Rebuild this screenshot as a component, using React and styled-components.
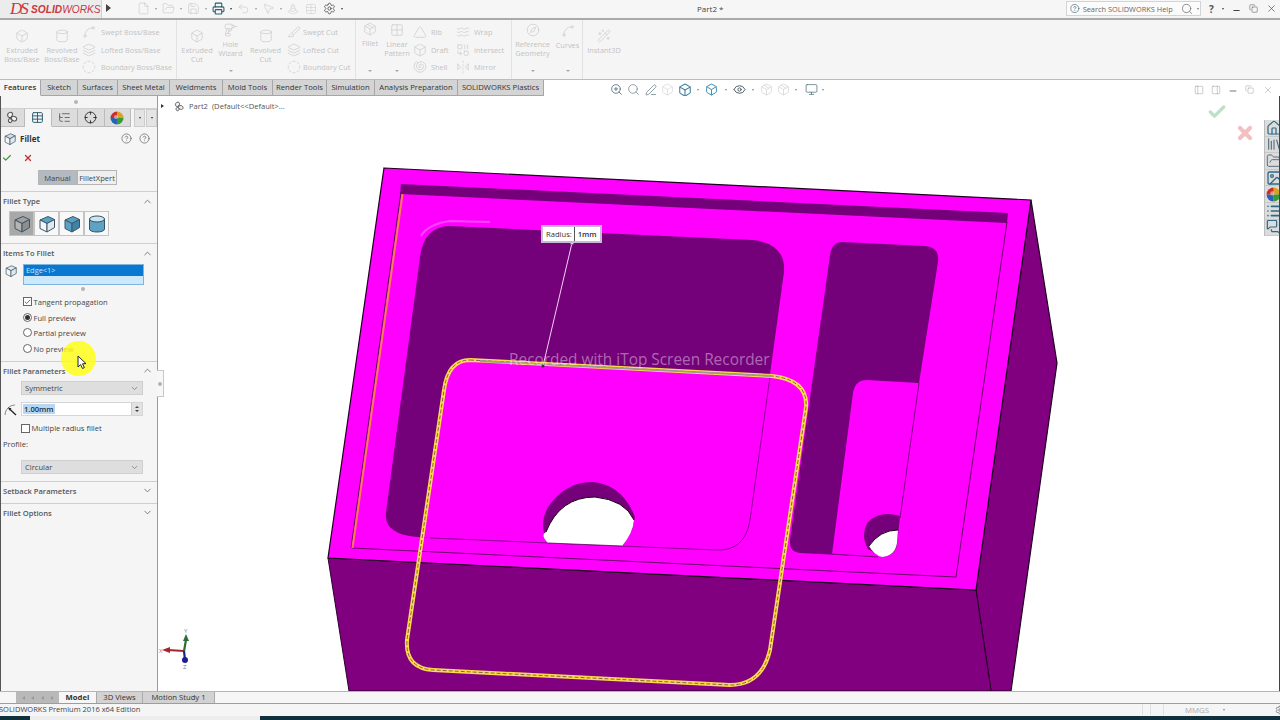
import React from "react";
import styled, { createGlobalStyle } from "styled-components";
import {
  Box, Cylinder, Spline, Layers, CircleDashed, Drill, Slice, Grid2x2, Triangle, Shell, Package,
  FlipHorizontal2, Compass, Wand2, Waves, Combine, File, FolderOpen, Save, Printer, Undo2,
  MousePointer2, TrafficCone, Table, Settings, Search, ZoomIn, PenLine, Eye, Monitor, Home,
  Library, Image, List, MessagesSquare, Check, X, Minus, Copy, HelpCircle, PanelLeft, PanelRight,
  ChevronUp, ChevronDown, Crosshair, ListTree,
} from "lucide-react";

const Global = createGlobalStyle`
  html, body { margin: 0; padding: 0; width: 1280px; height: 720px; overflow: hidden; background: #fff; }
  * { box-sizing: border-box; }
`;

const Page = styled.div`
  width: 1280px; height: 720px; display: flex; flex-direction: column; overflow: hidden;
  font-family: "Open Sans", "Noto Sans", sans-serif; font-size: 8px; color: #333;
`;

/* ---------- title bar ---------- */
const TitleBar = styled.header`
  height: 20px; flex: none; display: flex; align-items: flex-start; background: #f6f6f6;
  border-bottom: 2px solid #a9a9a9; position: relative;
`;
const LogoBox = styled.div`
  width: 102px; height: 18px; background: #ececec; display: flex; align-items: center; padding-left: 10px; overflow: hidden;
  border-right: 1px solid #cfcfcf;
`;
const LogoMark = styled.span`
  font: italic 400 17px "Liberation Serif", serif; color: #c8383f; letter-spacing: -2px; width: 21px; flex: none; margin-top: -1px;
`;
const LogoWord = styled.span`
  font: italic 700 10.2px "Liberation Sans", sans-serif; color: #c8383f; white-space: nowrap;
  & > i { font-weight: 400; }
`;
const QuickArrow = styled.span`
  width: 0; height: 0; margin: 4px 0 0 4px; border-left: 5px solid #444; border-top: 4px solid transparent; border-bottom: 4px solid transparent;
`;
const QuickBar = styled.div`
  display: flex; align-items: center; height: 17px; margin-left: 26px; gap: 3px;
`;
const Caret = styled.span`
  display: inline-block; width: 0; height: 0; border-left: 1.6px solid transparent; border-right: 1.6px solid transparent;
  border-top: 2.4px solid ${(p) => p.$c || "#777"}; margin: 0 ${(p) => p.$m ?? 2}px; flex: none;
`;
const DocTitle = styled.div`
  position: absolute; left: 697px; top: 3px; font-size: 8px; color: #444;
`;
const SearchBox = styled.div`
  position: absolute; left: 1066px; top: 1px; width: 135px; height: 15px; background: #fbfbfb; border: 1px solid #d4d4d4;
  display: flex; align-items: center; padding-left: 3px; gap: 3px; color: #666; font-size: 7.4px; white-space: nowrap;
`;
const WinControls = styled.div`
  position: absolute; left: 1209px; top: 1px; display: flex; align-items: center; gap: 8px; height: 15px;
`;
const QMark = styled.span`
  font: 700 10px "Open Sans", sans-serif; color: #555;
`;

/* ---------- ribbon ---------- */
const Ribbon = styled.div`
  height: 59px; flex: none; display: flex; background: #f5f5f5; padding-left: 2px; color: #c3c3c3;
`;
const RibbonGroup = styled.div`
  display: flex; width: ${(p) => p.$w}px; padding: 3px 0; border-right: ${(p) => (p.$last ? "none" : "1px solid #e2e2e2")}; height: 59px;
`;
const BigButton = styled.div`
  width: ${(p) => p.$w}px; flex: none; display: flex; flex-direction: column; align-items: center; text-align: center;
  line-height: 9px; font-size: 7.4px;
`;
const BigIconSlot = styled.div`
  height: ${(p) => p.$h}px; flex: none; display: flex; align-items: flex-end; justify-content: center; padding-bottom: 3px;
`;
const BigCaret = styled.span`
  margin-top: auto; margin-bottom: 4px; width: 0; height: 0; border-left: 2px solid transparent; border-right: 2px solid transparent;
  border-top: 2.5px solid #a8a8a8;
`;
const SmallStack = styled.div`
  display: flex; flex-direction: column; width: ${(p) => p.$w}px; flex: none; margin-left: ${(p) => p.$ml || 0}px;
`;
const SmallRow = styled.div`
  height: 18px; display: flex; align-items: center; font-size: 7.4px; white-space: nowrap; gap: ${(p) => p.$gap}px;
  & > svg { flex: none; }
`;

/* ---------- tab row ---------- */
const TabRow = styled.nav`
  height: 17px; flex: none; display: flex; align-items: stretch; background: #fff; position: relative; border-top: 1px solid #bcbcbc;
`;
const CmdTab = styled.div`
  width: ${(p) => p.$w}px; display: flex; align-items: center; justify-content: center; white-space: nowrap; font-size: 7.7px; color: #333; padding-bottom: 2px;
  background: ${(p) => (p.$active ? "#f5f5f5" : "#d4d4d4")}; border-right: 1px solid #a6a6a6; border-bottom: 1px solid ${(p) => (p.$active ? "#f5f5f5" : "#a6a6a6")};
  font-weight: ${(p) => (p.$active ? 600 : 400)};
`;
const HeadsUp = styled.div`
  position: absolute; left: 608px; top: 3px; display: flex; align-items: center; height: 13px;
`;
const HeadIcon = styled.span`
  width: ${(p) => p.$w || 17}px; display: flex; justify-content: center; align-items: center; flex: none;
`;
const ViewControls = styled.div`
  position: absolute; left: 1194px; top: 3px; display: flex; align-items: center; gap: 7px; height: 13px;
`;

/* ---------- main ---------- */
const Main = styled.main`
  flex: 1; min-height: 0; display: flex; border-right: 1px solid #444;
`;
const Panel = styled.aside`
  width: 158px; flex: none; background: #f5f5f5; border-left: 1px solid #555; border-right: 1px solid #9a9a9a; position: relative;
  display: flex; flex-direction: column;
`;
const Strip = styled.div`
  height: 13px; border-bottom: 1px solid #d0d0d0; display: flex; align-items: center; justify-content: center; padding-right: 6px;
`;
const Dot = styled.span`
  width: 4px; height: 4px; border-radius: 50%; background: #b4b4b4; display: block;
`;
const PanelTabs = styled.div`
  height: 18px; display: flex; align-items: stretch; position: relative;
`;
const PanelTab = styled.div`
  width: ${(p) => p.$w || 26.5}px; flex: none; display: flex; align-items: center; justify-content: center;
  background: ${(p) => (p.$active ? "#f5f5f5" : "#dcdcdc")}; border-right: 1px solid #bbb; border-bottom: 1px solid ${(p) => (p.$active ? "#f5f5f5" : "#bbb")};
`;
const TabArrow = styled.div`
  width: 11px; flex: none; margin-left: ${(p) => p.$ml}px; display: flex; align-items: center; justify-content: center; background: #e4e4e4; border: 1px solid #ccc;
`;
const PropHeader = styled.div`
  height: 23px; display: flex; align-items: center; padding: 0 7px 0 2px; gap: 3px; font-size: 8px; font-weight: 700; color: #333;
`;
const HelpGroup = styled.div`
  margin-left: auto; display: flex; gap: 7px; align-items: center;
`;
const ActionRow = styled.div`
  height: 16px; display: flex; align-items: center; padding-left: 1px; gap: 11px;
`;
const ModeRow = styled.div`
  display: flex; margin: 4px 0 6px 37px; height: 15px;
`;
const ModeButton = styled.div`
  width: ${(p) => p.$w}px; display: flex; align-items: center; justify-content: center; font-size: 7.6px; white-space: nowrap; color: #444;
  background: ${(p) => (p.$on ? "#b3bac2" : "#efefef")}; border: 1px solid #b5b5b5;
`;
const Section = styled.section`
  border-top: 1px solid #cfcfcf;
  padding-bottom: ${(p) => p.$pb || 0}px;
`;
const SectionHead = styled.div`
  height: ${(p) => p.$h || 19}px; display: flex; align-items: center; justify-content: space-between; padding: 0 4px 1px 2px;
  font-size: 7.6px; font-weight: 600; color: #555; white-space: nowrap;
`;
const TypeRow = styled.div`
  display: flex; margin-left: 8px; height: 25px;
`;
const TypeCell = styled.div`
  width: 25px; height: 25px; display: flex; align-items: center; justify-content: center;
  background: ${(p) => (p.$on ? "#a8a8a8" : "#f8f8f8")}; border: 1px solid #c4c4c4;
`;
const ListRow = styled.div`
  display: flex; align-items: flex-start; margin-top: 1px; padding-left: 3px; height: 21px; gap: 5px;
`;
const SelectList = styled.div`
  width: 121px; height: 21px; background: #cce8fb; border: 1px solid #7fb5dc; display: flex; flex-direction: column;
`;
const SelectedItem = styled.div`
  height: 11px; background: #0a78d0; color: #cfe6f7; font-size: 7.4px; line-height: 10px; padding-left: 2px;
`;
const ListGrip = styled.div`
  height: 6px; margin-top: 1px; display: flex; align-items: center; justify-content: center; padding-left: 8px;
`;
const OptionRow = styled.div`
  height: ${(p) => p.$h || 15}px; margin-top: ${(p) => p.$mt || 0}px; display: flex; align-items: center; padding-left: ${(p) => p.$pl}px; gap: 1.5px;
  font-size: 7.6px; color: #444; white-space: nowrap;
`;
const CheckBox = styled.span`
  width: 9px; height: 9px; background: #fff; border: 1px solid #666; display: flex; align-items: center; justify-content: center; flex: none;
`;
const Radio = styled.span`
  width: 9px; height: 9px; border-radius: 50%; background: #fff; border: 1px solid #666; display: flex; align-items: center; justify-content: center; flex: none;
  &::after { content: ""; width: 5px; height: 5px; border-radius: 50%; background: ${(p) => (p.$on ? "#333" : "transparent")}; }
`;
const Combo = styled.div`
  width: 122px; height: ${(p) => p.$h || 14}px; margin: ${(p) => p.$mt || 0}px 0 0 20px; background: #dedede; border: 1px solid #cfcfcf;
  display: flex; align-items: center; justify-content: space-between; padding: 0 3px; font-size: 7.6px; color: #444;
`;
const InputRow = styled.div`
  display: flex; align-items: center; margin-top: 7px; height: 14px; padding-left: 3px; gap: 4px;
`;
const NumberInput = styled.div`
  width: 122px; height: 14px; background: #fff; border: 1px solid #d6d6d6; display: flex; align-items: center; padding-left: 1px; position: relative;
  font-size: 7.6px; color: #234;
`;
const Selected = styled.span`
  background: #b7d7f2; padding: 0 1px; line-height: 10px; font-weight: 600;
`;
const Spinner = styled.span`
  margin-left: auto; width: 11px; height: 100%; background: #e2e2e2; border-left: 1px solid #ccc; display: flex; flex-direction: column; align-items: center; justify-content: center; gap: 2px;
`;
const SpinUp = styled.i`
  width: 0; height: 0; border-left: 2px solid transparent; border-right: 2px solid transparent; border-bottom: 2.5px solid #444;
`;
const SpinDown = styled.i`
  width: 0; height: 0; border-left: 2px solid transparent; border-right: 2px solid transparent; border-top: 2.5px solid #444;
`;
const Highlight = styled.div`
  position: absolute; left: 60px; top: 245px; width: 35px; height: 35px; border-radius: 50%;
  background: rgba(255, 255, 20, 0.82); pointer-events: none;
`;
const Cursor = styled.svg`
  position: absolute; left: 75px; top: 259px; width: 12px; height: 15px;
`;
const Splitter = styled.div`
  position: absolute; left: 156px; top: 274px; width: 7px; height: 27px; background: #f7f7f7; border: 1px solid #c8c8c8; border-left: none;
  display: flex; align-items: center; justify-content: center; z-index: 3;
`;

/* ---------- viewport ---------- */
const Viewport = styled.div`
  flex: 1; position: relative; background: #fff; overflow: hidden;
`;
const Scene = styled.svg`
  display: block; width: 1121px; height: 595px;
`;
const TreeCrumb = styled.div`
  position: absolute; left: 3px; top: 4px; height: 12px; display: flex; align-items: center; gap: 4px; font-size: 7.6px; color: #555; white-space: nowrap;
`;
const CrumbArrow = styled.span`
  width: 0; height: 0; border-left: 3px solid #333; border-top: 2.5px solid transparent; border-bottom: 2.5px solid transparent; margin-right: 6px;
`;
const Confirm = styled.div`
  position: absolute; left: ${(p) => p.$x}px; top: ${(p) => p.$y}px; opacity: 0.3;
`;
const TaskPane = styled.div`
  position: absolute; right: 0; top: 24px; width: 15px; display: flex; flex-direction: column;
  background: #dcdcdc; border-left: 1px solid #bcbcbc;
`;
const TaskIcon = styled.div`
  height: 16.6px; display: flex; align-items: center; justify-content: flex-start; padding-left: 1px; border-bottom: 1px solid #c8c8c8;
  overflow: hidden;
  & > svg { flex: none; }
`;
const DimBox = styled.div`
  position: absolute; left: 383px; top: 129px; width: 61px; height: 18px; background: #fff; border: 2px solid #c9b8d8;
  display: flex; align-items: center; font-size: 7.6px; color: #333; white-space: nowrap;
`;
const DimLabel = styled.span`
  padding: 0 2px 0 3px; border-right: 1px solid #555; height: 14px; line-height: 14px;
`;
const DimValue = styled.span`
  padding-left: 3px; font-weight: 600;
`;
const Watermark = styled.div`
  position: absolute; left: 351px; top: 253px; font-size: 15.4px; color: rgba(255, 255, 255, 0.42); white-space: nowrap;
`;

/* ---------- bottom ---------- */
const BottomTabs = styled.div`
  height: 12px; flex: none; display: flex; padding-left: 16px; background: #f6f6f6; border-top: 1px solid #b5b5b5;
`;
const NavArrows = styled.div`
  width: 43px; background: #b9b9b9; display: flex; align-items: center; justify-content: space-around; padding: 0 3px;
`;
const NavMark = styled.i`
  width: 0; height: 0; border-right: 3px solid #9a9a9a; border-top: 2px solid transparent; border-bottom: 2px solid transparent;
`;
const SheetTab = styled.div`
  width: ${(p) => p.$w}px; display: flex; align-items: center; justify-content: center; font-size: 7.7px; color: #333; white-space: nowrap; padding-bottom: 2px;
  font-weight: ${(p) => (p.$active ? 700 : 400)};
  background: ${(p) => (p.$active ? "#f6f6f6" : "#d2d2d2")}; border-right: 1px solid #aaa;
`;
const StatusBar = styled.footer`
  height: 13px; flex: none; background: #f5f5f5; border-top: 1px solid #9d9d9d; display: flex; align-items: center; position: relative; font-size: 7.5px; color: #444;
  padding-bottom: 3px;
`;
const StatusText = styled.span`
  margin-left: -1px; white-space: nowrap;
`;
const StatusRight = styled.div`
  position: absolute; left: 1142px; top: 0; height: 11px; display: flex; align-items: center; color: #aaa; font-size: 7.8px;
`;
const StatusCell = styled.span`
  width: ${(p) => p.$w}px; height: 11px; border-left: 1px solid #e0e0e0;
`;
const TaskBar = styled.div`
  height: 4px; flex: none; display: flex; background: #10303c;
`;
const TaskSlot = styled.div`
  margin-left: 30px; width: 230px; background: #ededed;
`;

/* ---------- icons ---------- */
const Cube = ({ top = "#fff", side = "#dfe9ee", front = "#f5f5f5", s = 20 }) => (
  <svg width={s} height={s} viewBox="0 0 20 20">
    <path d="M3 6 L11 2.5 L17.5 5.5 L10 9.5 Z" fill={top} stroke="#3c5564" strokeWidth="1" />
    <path d="M3 6 L10 9.5 L10 18 L3 14.5 Z" fill={front} stroke="#3c5564" strokeWidth="1" />
    <path d="M10 9.5 L17.5 5.5 L17.5 13.5 L10 18 Z" fill={side} stroke="#3c5564" strokeWidth="1" />
  </svg>
);
const Drum = () => (
  <svg width="20" height="20" viewBox="0 0 20 20">
    <path d="M2.5 5 V15 C2.5 19 17.5 19 17.5 15 V5 Z" fill="#5fa3c4" stroke="#2f5568" />
    <ellipse cx="10" cy="5" rx="7.5" ry="3" fill="#cfe3ec" stroke="#2f5568" />
  </svg>
);
const Wheel = ({ s = 14 }) => (
  <svg width={s} height={s} viewBox="0 0 14 14">
    <path d="M7 7 L7 0.5 A6.5 6.5 0 0 1 13.5 7 Z" fill="#d9a21b" />
    <path d="M7 7 L13.5 7 A6.5 6.5 0 0 1 7 13.5 Z" fill="#3a9a3a" />
    <path d="M7 7 L7 13.5 A6.5 6.5 0 0 1 0.5 7 Z" fill="#2763b5" />
    <path d="M7 7 L0.5 7 A6.5 6.5 0 0 1 7 0.5 Z" fill="#c9302c" />
    <circle cx="6" cy="6" r="2" fill="#f1d9c9" opacity=".6" />
  </svg>
);
const RadiusGlyph = () => (
  <svg width="13" height="13" viewBox="0 0 13 13" fill="none">
    <path d="M1 12 C1.5 6 5 2.5 11 2" stroke="#7c8c96" strokeWidth="1" />
    <path d="M12 12 L5 5.5" stroke="#222" strokeWidth="1.3" />
    <path d="M4 4.5 L7.5 5.2 L5.5 7.5 Z" fill="#222" />
  </svg>
);
const PartTree = ({ s = 12 }) => (
  <svg width={s} height={s} viewBox="0 0 12 12" fill="#eef2f4" stroke="#555" strokeWidth="1">
    <path d="M3 1.5 C5 0.5 6.5 2 6 3.6 L5 5.5 C4 6.6 2 6.2 1.6 4.6 C1.3 3.4 2 2 3 1.5 Z" />
    <path d="M5 5.5 C7 4.4 9 5 9.6 6.3 C10.4 7.6 9.5 9 8.4 9.2 C6.8 9.4 5.4 8.6 5 7.4 Z" />
    <path d="M3.6 7 C5 7 5.8 8.4 5.4 9.6 C5 10.8 3.4 11 2.6 10 C1.8 9 2.4 7.2 3.6 7 Z" />
  </svg>
);

const pale = { color: "#cdcdcd", strokeWidth: 1.3 };
const Big = ({ w, h, icon: I, size = 14, caret, children }) => (
  <BigButton $w={w}>
    <BigIconSlot $h={h}><I size={size} {...pale} /></BigIconSlot>
    <span>{children}</span>
    {caret && <BigCaret />}
  </BigButton>
);
const Small = ({ icon: I, gap, children }) => (
  <SmallRow $gap={gap}><I size={14} {...pale} />{children}</SmallRow>
);

const quick = [
  [File, "#c9c9c9"], [FolderOpen, "#c9c9c9"], [Save, "#c9c9c9"], [Printer, "#2b5f73"], [Undo2, "#c9c9c9"], [MousePointer2, "#c9c9c9"],
];
const tabs = [
  ["Features", 41, true], ["Sketch", 37], ["Surfaces", 40], ["Sheet Metal", 52], ["Weldments", 53], ["Mold Tools", 50],
  ["Render Tools", 54], ["Simulation", 48], ["Analysis Preparation", 83], ["SOLIDWORKS Plastics", 86],
];

const IconChev = () => <Caret $m={0} $c="#888" />;

export default function App() {
  return (
    <Page>
      <Global />
      <TitleBar>
        <LogoBox>
          <LogoMark>DS</LogoMark>
          <LogoWord>SOLID<i>WORKS</i></LogoWord>
        </LogoBox>
        <QuickArrow />
        <QuickBar>
          {quick.map(([I, c], i) => (
            <React.Fragment key={i}>
              <I size={13} color={c} strokeWidth={c === "#c9c9c9" ? 1.2 : 2} />
              <Caret $c={i === 3 ? "#333" : "#999"} />
            </React.Fragment>
          ))}
          <TrafficCone size={12} color="#d2d2d2" strokeWidth={1.3} />
          <Table size={12} color="#d2d2d2" strokeWidth={1.3} style={{ marginLeft: 3 }} />
          <Settings size={13} color="#444" strokeWidth={1.4} style={{ marginLeft: 3 }} />
          <Caret $c="#444" />
        </QuickBar>
        <DocTitle>Part2 *</DocTitle>
        <SearchBox>
          <HelpCircle size={11} color="#3f6478" strokeWidth={1.6} />
          <span>Search SOLIDWORKS Help</span>
          <Search size={14} color="#666" strokeWidth={1.4} style={{ marginLeft: 5 }} />
          <Caret $m={1} />
        </SearchBox>
        <WinControls>
          <QMark>?</QMark>
          <Caret $m={0} $c="#444" />
          <Minus size={9} color="#444" strokeWidth={3} style={{ marginTop: 4 }} />
          <Copy size={9} color="#555" strokeWidth={1.4} />
          <X size={11} color="#555" strokeWidth={1.6} />
        </WinControls>
      </TitleBar>

      <Ribbon>
        <RibbonGroup $w={175}>
          <Big w={40} h={23} icon={Box}>Extruded Boss/Base</Big>
          <Big w={40} h={23} icon={Cylinder}>Revolved Boss/Base</Big>
          <SmallStack $w={90}>
            <Small icon={Spline} gap={5}>Swept Boss/Base</Small>
            <Small icon={Layers} gap={5}>Lofted Boss/Base</Small>
            <Small icon={CircleDashed} gap={5}>Boundary Boss/Base</Small>
          </SmallStack>
        </RibbonGroup>
        <RibbonGroup $w={179}>
          <Big w={40} h={23} icon={Box}>Extruded Cut</Big>
          <Big w={27} h={17} icon={Drill} caret>Hole Wizard</Big>
          <Big w={43} h={23} icon={Cylinder}>Revolved Cut</Big>
          <SmallStack $w={66}>
            <Small icon={Slice} gap={2}>Swept Cut</Small>
            <Small icon={Layers} gap={2}>Lofted Cut</Small>
            <Small icon={CircleDashed} gap={2}>Boundary Cut</Small>
          </SmallStack>
        </RibbonGroup>
        <RibbonGroup $w={156}>
          <Big w={28} h={16} icon={Package} caret>Fillet</Big>
          <Big w={26} h={17} icon={Grid2x2} caret>Linear Pattern</Big>
          <SmallStack $w={43} $ml={3}>
            <Small icon={Triangle} gap={4}>Rib</Small>
            <Small icon={Box} gap={4}>Draft</Small>
            <Small icon={Shell} gap={4}>Shell</Small>
          </SmallStack>
          <SmallStack $w={50}>
            <Small icon={Waves} gap={4}>Wrap</Small>
            <Small icon={Combine} gap={4}>Intersect</Small>
            <Small icon={FlipHorizontal2} gap={4}>Mirror</Small>
          </SmallStack>
        </RibbonGroup>
        <RibbonGroup $w={71}>
          <Big w={41} h={17} icon={Compass} caret>Reference Geometry</Big>
          <Big w={29} h={18} icon={Spline} caret>Curves</Big>
        </RibbonGroup>
        <RibbonGroup $w={60} $last>
          <Big w={42} h={23} icon={Wand2}>Instant3D</Big>
        </RibbonGroup>
      </Ribbon>

      <TabRow>
        {tabs.map(([t, w, a]) => <CmdTab key={t} $w={w} $active={a}>{t}</CmdTab>)}
        <HeadsUp>
          <HeadIcon><ZoomIn size={13} color="#4a6a78" strokeWidth={1.5} /></HeadIcon>
          <HeadIcon><Search size={13} color="#6a7f88" strokeWidth={1.3} /></HeadIcon>
          <HeadIcon><PenLine size={12} color="#6a7f88" strokeWidth={1.5} /></HeadIcon>
          <HeadIcon><Box size={13} color="#d4d4d4" strokeWidth={1.2} /></HeadIcon>
          <HeadIcon><Box size={14} color="#3d7f9c" strokeWidth={1.8} /></HeadIcon>
          <HeadIcon $w={9}><IconChev /></HeadIcon>
          <HeadIcon $w={19}><Box size={13} color="#3d8fb4" strokeWidth={1.8} /></HeadIcon>
          <HeadIcon $w={9}><IconChev /></HeadIcon>
          <HeadIcon $w={18}><Eye size={13} color="#4f5f66" strokeWidth={1.8} /></HeadIcon>
          <HeadIcon $w={9}><IconChev /></HeadIcon>
          <HeadIcon $w={18}><Package size={13} color="#d8d8d8" strokeWidth={1.6} /></HeadIcon>
          <HeadIcon $w={16}><Package size={13} color="#d8d8d8" strokeWidth={1.6} /></HeadIcon>
          <HeadIcon $w={9}><IconChev /></HeadIcon>
          <HeadIcon $w={22}><Monitor size={13} color="#55707c" strokeWidth={1.4} /></HeadIcon>
          <HeadIcon $w={1}><IconChev /></HeadIcon>
        </HeadsUp>
        <ViewControls>
          <PanelLeft size={10} color="#999" strokeWidth={1.2} />
          <PanelRight size={10} color="#999" strokeWidth={1.2} />
          <Minus size={10} color="#777" strokeWidth={2.5} style={{ marginTop: 3 }} />
          <Copy size={9} color="#999" strokeWidth={1.2} />
          <X size={10} color="#999" strokeWidth={1.2} style={{ marginLeft: 2 }} />
        </ViewControls>
      </TabRow>

      <Main>
        <Panel>
          <Strip><Dot /></Strip>
          <PanelTabs>
            <PanelTab $w={24}><PartTree s={13} /></PanelTab>
            <PanelTab $active><Table size={13} color="#2f5f72" strokeWidth={1.8} /></PanelTab>
            <PanelTab><ListTree size={13} color="#555" strokeWidth={1.5} /></PanelTab>
            <PanelTab><Crosshair size={13} color="#222" strokeWidth={1.6} /></PanelTab>
            <PanelTab><Wheel /></PanelTab>
            <TabArrow $ml={3}><Caret $m={0} $c="#333" /></TabArrow>
            <TabArrow $ml={1}><Caret $m={0} $c="#333" /></TabArrow>
          </PanelTabs>
          <PropHeader>
            <Cube s={14} top="#cfe0e8" />
            <span>Fillet</span>
            <HelpGroup>
              <HelpCircle size={11} color="#555" strokeWidth={1.4} />
              <HelpCircle size={11} color="#555" strokeWidth={1.4} />
            </HelpGroup>
          </PropHeader>
          <ActionRow>
            <Check size={10} color="#3f9a3f" strokeWidth={3} />
            <X size={10} color="#c42c30" strokeWidth={3} />
          </ActionRow>
          <ModeRow>
            <ModeButton $w={39} $on>Manual</ModeButton>
            <ModeButton $w={40}>FilletXpert</ModeButton>
          </ModeRow>
          <Section $pb={7}>
            <SectionHead>Fillet Type <ChevronUp size={11} color="#555" strokeWidth={1.6} /></SectionHead>
            <TypeRow>
              <TypeCell $on><Cube top="#a0a0a0" side="#8e8e8e" front="#b4b4b4" /></TypeCell>
              <TypeCell><Cube top="#59a2c6" /></TypeCell>
              <TypeCell><Cube top="#59a2c6" side="#3f84a8" front="#59a2c6" /></TypeCell>
              <TypeCell><Drum /></TypeCell>
            </TypeRow>
          </Section>
          <Section $pb={5}>
            <SectionHead>Items To Fillet <ChevronUp size={11} color="#555" strokeWidth={1.6} /></SectionHead>
            <ListRow>
              <Cube s={14} top="#dfeaf0" />
              <SelectList><SelectedItem>Edge&lt;1&gt;</SelectedItem></SelectList>
            </ListRow>
            <ListGrip><Dot /></ListGrip>
            <OptionRow $pl={22} $mt={2}><CheckBox><Check size={8} color="#333" strokeWidth={2.5} /></CheckBox>Tangent propagation</OptionRow>
            <OptionRow $pl={22} $mt={1}><Radio $on />Full preview</OptionRow>
            <OptionRow $pl={22}><Radio />Partial preview</OptionRow>
            <OptionRow $pl={22} $mt={1}><Radio />No preview</OptionRow>
          </Section>
          <Section $pb={7}>
            <SectionHead $h={18}>Fillet Parameters <ChevronUp size={11} color="#555" strokeWidth={1.6} /></SectionHead>
            <Combo $mt={1}>Symmetric <ChevronDown size={9} color="#777" /></Combo>
            <InputRow>
              <RadiusGlyph />
              <NumberInput>
                <Selected>1.00mm</Selected>
                <Spinner><SpinUp /><SpinDown /></Spinner>
              </NumberInput>
            </InputRow>
            <OptionRow $pl={20} $h={12} $mt={6}><CheckBox />Multiple radius fillet</OptionRow>
            <OptionRow $pl={2} $h={12} $mt={4}>Profile:</OptionRow>
            <Combo $mt={10}>Circular <ChevronDown size={9} color="#777" /></Combo>
          </Section>
          <Section $pb={3}>
            <SectionHead $h={18}>Setback Parameters <ChevronDown size={11} color="#555" strokeWidth={1.6} /></SectionHead>
          </Section>
          <Section>
            <SectionHead $h={18}>Fillet Options <ChevronDown size={11} color="#555" strokeWidth={1.6} /></SectionHead>
          </Section>
          <Highlight />
          <Cursor viewBox="0 0 12 15">
            <path d="M2 1 L2 12 L4.6 9.6 L6.5 13.5 L8.4 12.6 L6.5 8.8 L10 8.6 Z" fill="#fff" stroke="#222" strokeWidth="1" />
          </Cursor>
          <Splitter><Dot /></Splitter>
        </Panel>

        <Viewport>
          <Scene viewBox="158 96 1121 595" preserveAspectRatio="none">
            <defs>
              <clipPath id="pocket">
                <path d="M450 226 L752 240 Q786 243 784 272 L750 520 Q745 552 715 550 L417 537 Q383 534 386 512 L420 257 Q424 226 450 226 Z" />
              </clipPath>
            </defs>
            <path d="M1031 200 L1057 363 L1011 691 L991 691 L976 590 Z" fill="#800080" stroke="#1d001d" strokeWidth="1.2" />
            <path d="M328 558 L976 590 L991 691 L349 691 Z" fill="#800080" stroke="#2a002a" strokeWidth="1" />
            <path d="M384 168 L1031 200 L976 590 L328 558 Z" fill="#ff00ff" stroke="#1d001d" strokeWidth="1.2" />
            <path d="M401 184 L1008 213 L1007 223 L400 194 Z" fill="#74007a" />
            <path d="M1007 222 L956 577 L352 548" fill="none" stroke="#6a006a" strokeWidth="1" />
            <path d="M401 192 L351 548" fill="none" stroke="#5a005a" strokeWidth="1" />
            <path d="M402.5 194 L352.5 548" fill="none" stroke="#ff7a50" strokeWidth="2" />
            <path d="M421 236 Q428 224 450 221 L490 222" fill="none" stroke="#ff45ff" strokeWidth="2" />
            <path d="M450 226 L752 240 Q786 243 784 272 L750 520 Q745 552 715 550 L417 537 Q383 534 386 512 L420 257 Q424 226 450 226 Z" fill="#74007a" />
            <g clipPath="url(#pocket)">
              <path d="M470 360 L772 376 Q808 380 806 407 L770 650 Q762 685 730 685 L433 670 Q405 668 407 640 L444 390 Q448 360 470 360 Z" fill="#ff00ff" />
            </g>
            <path d="M770 377 L750 520 Q745 552 715 550 L430 538" fill="none" stroke="#8a0090" strokeWidth="0.9" />
            <path d="M842 242 L925 246 Q940 247 938 262 L919 383 L900 518 Q895 558 878 557 L800 553 Q789 552 790 540 L830 255 Q832 242 842 242 Z" fill="#74007a" />
            <path d="M867 380 L919 383 L900 518 Q898 557 878 557 L832 554 L853 393 Q855 380 867 380 Z" fill="#ff00ff" />
            <path d="M919 383 L900 518" fill="none" stroke="#7a0080" strokeWidth="0.9" />
            <path d="M832 554 L878 557" fill="none" stroke="#7a0080" strokeWidth="0.9" />
            <path d="M900 516 Q880 510 868 522 Q860 535 868 549 L882 557 Q895 556 897 545 Z" fill="#74007a" />
            <path d="M898 530 Q880 530 869 546 Q874 555 882 557 Q895 556 897 543 Z" fill="#fff" />
            <path d="M898 530 Q880 530 869 546" fill="none" stroke="#140014" strokeWidth="1" />
            <path d="M548 543 Q538 525 548 507 Q565 482 592 482 Q622 484 635 517 L632 530 L622 546 Z" fill="#74007a" />
            <path d="M548 543 Q540 535 546 532 Q560 497 595 497 Q625 500 634 520 Q633 533 622 546 Z" fill="#fff" />
            <path d="M546 532 Q560 497 595 497 Q625 500 634 520" fill="none" stroke="#140014" strokeWidth="1" />
            <path d="M548 543 L622 546" fill="none" stroke="#6a006a" strokeWidth="0.8" />
            <path d="M470 360 L772 376 Q808 380 806 407 L770 650 Q762 685 730 685 L433 670 Q405 668 407 640 L444 390 Q448 360 470 360 Z" fill="none" stroke="#ffd84e" strokeWidth="4" />
            <path d="M470 360 L772 376 Q808 380 806 407 L770 650 Q762 685 730 685 L433 670 Q405 668 407 640 L444 390 Q448 360 470 360 Z" fill="none" stroke="#6b5c46" strokeWidth="0.9" strokeDasharray="4 2" />
            <path d="M480 361 L772 376" fill="none" stroke="#9b9b90" strokeWidth="1.8" />
            <path d="M572 243 L543 366" fill="none" stroke="#f3d0f3" strokeWidth="1" />
            <circle cx="543" cy="366" r="1.5" fill="#333" />
            <circle cx="572" cy="243" r="1.8" fill="#ddd" stroke="#555" strokeWidth=".6" />
            {/* reference triad */}
            <path d="M184 651 L168 650" stroke="#a5262c" strokeWidth="2.2" />
            <path d="M162 650 L170 647 L170 653 Z" fill="#a5262c" />
            <path d="M184 651 L186 640" stroke="#2e6b35" strokeWidth="2.2" />
            <path d="M186 634 L189 641 L183 641 Z" fill="#2e6b35" />
            <path d="M184 651 L185 660" stroke="#1b1f8a" strokeWidth="2.2" />
            <circle cx="185" cy="660" r="3" fill="#1b1f8a" />
            <text x="159" y="653" fontSize="6" fill="#c06a6a" fontFamily="Open Sans">X</text>
            <text x="184" y="633" fontSize="6" fill="#6f8f75" fontFamily="Open Sans">Y</text>
            <text x="183" y="669" fontSize="6" fill="#6a6f9a" fontFamily="Open Sans">Z</text>
          </Scene>

          <TreeCrumb>
            <CrumbArrow />
            <PartTree s={11} />
            <span>Part2&nbsp;&nbsp;(Default&lt;&lt;Default&gt;...</span>
          </TreeCrumb>
          <Confirm $x={1049} $y={6}><Check size={20} color="#2f9a4a" strokeWidth={4} /></Confirm>
          <Confirm $x={1077} $y={27}><X size={20} color="#d8333a" strokeWidth={5} /></Confirm>
          <TaskPane>
            <TaskIcon><Home size={16} color="#2f6a85" strokeWidth={1.8} /></TaskIcon>
            <TaskIcon><Library size={16} color="#4c6a78" strokeWidth={1.6} /></TaskIcon>
            <TaskIcon><FolderOpen size={16} color="#4c6a78" strokeWidth={1.4} /></TaskIcon>
            <TaskIcon><Image size={16} color="#2f6a85" strokeWidth={2} /></TaskIcon>
            <TaskIcon><Wheel s={15} /></TaskIcon>
            <TaskIcon><List size={16} color="#2f6a85" strokeWidth={2.4} /></TaskIcon>
            <TaskIcon><MessagesSquare size={16} color="#2f6a85" strokeWidth={1.8} /></TaskIcon>
          </TaskPane>
          <DimBox><DimLabel>Radius:</DimLabel><DimValue>1mm</DimValue></DimBox>
          <Watermark>Recorded with iTop Screen Recorder</Watermark>
        </Viewport>
      </Main>

      <BottomTabs>
        <NavArrows><NavMark /><NavMark /><NavMark /><NavMark /></NavArrows>
        <SheetTab $w={38} $active>Model</SheetTab>
        <SheetTab $w={46}>3D Views</SheetTab>
        <SheetTab $w={72}>Motion Study 1</SheetTab>
      </BottomTabs>
      <StatusBar>
        <StatusText>SOLIDWORKS Premium 2016 x64 Edition</StatusText>
        <StatusRight>
          <StatusCell $w={8} /><StatusCell $w={13} /><StatusCell $w={22} />
          <span>MMGS</span>
          <Caret $m={14} $c="#888" />
          <Settings size={10} color="#777" style={{ marginLeft: 36 }} />
        </StatusRight>
      </StatusBar>
      <TaskBar><TaskSlot /></TaskBar>
    </Page>
  );
}
